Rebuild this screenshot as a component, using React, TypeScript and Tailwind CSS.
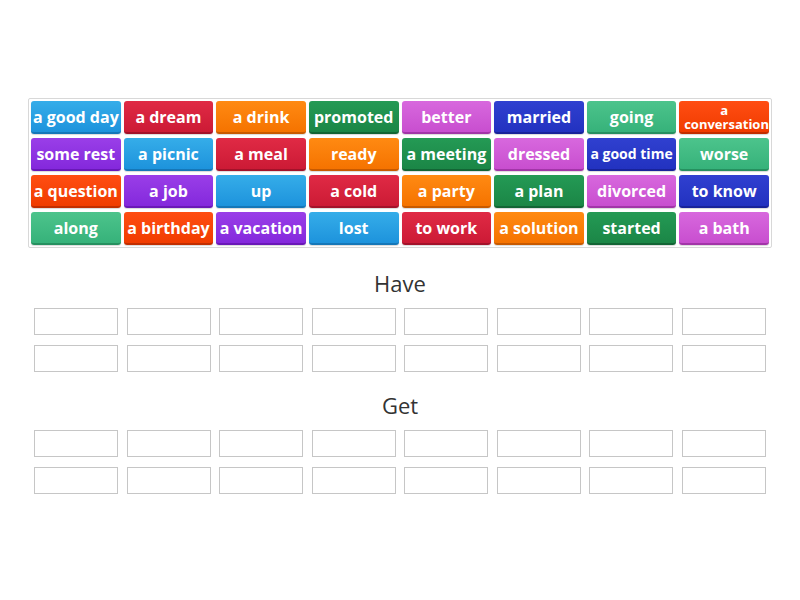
import React from "react";

const colors: Record<string, string> = {
  blue: "bg-linear-to-b from-[#35ade9] to-[#1d93dc] border-b-[#1577b8]",
  red: "bg-linear-to-b from-[#e02a45] to-[#cc1a35] border-b-[#a3122a]",
  orange: "bg-linear-to-b from-[#ff8a12] to-[#f57300] border-b-[#c85a00]",
  darkgreen: "bg-linear-to-b from-[#249a55] to-[#1b8646] border-b-[#136535]",
  pink: "bg-linear-to-b from-[#d868de] to-[#c84ecf] border-b-[#a235a8]",
  darkblue: "bg-linear-to-b from-[#3040d0] to-[#2232c0] border-b-[#18239a]",
  mint: "bg-linear-to-b from-[#4cc48c] to-[#36b27a] border-b-[#26905f]",
  redorange: "bg-linear-to-b from-[#ff4d12] to-[#f03c00] border-b-[#c22e00]",
  purple: "bg-linear-to-b from-[#9a3ee8] to-[#8428dc] border-b-[#6a18b8]",
};

const tiles: { text: string; color: string; size?: string }[] = [
  { text: "a good day", color: "blue" },
  { text: "a dream", color: "red" },
  { text: "a drink", color: "orange" },
  { text: "promoted", color: "darkgreen" },
  { text: "better", color: "pink" },
  { text: "married", color: "darkblue" },
  { text: "going", color: "mint" },
  { text: "a conversation", color: "redorange", size: "text-[13px] leading-[14px]" },
  { text: "some rest", color: "purple" },
  { text: "a picnic", color: "blue" },
  { text: "a meal", color: "red" },
  { text: "ready", color: "orange" },
  { text: "a meeting", color: "darkgreen" },
  { text: "dressed", color: "pink" },
  { text: "a good time", color: "darkblue", size: "text-[14px]" },
  { text: "worse", color: "mint" },
  { text: "a question", color: "redorange" },
  { text: "a job", color: "purple" },
  { text: "up", color: "blue" },
  { text: "a cold", color: "red" },
  { text: "a party", color: "orange" },
  { text: "a plan", color: "darkgreen" },
  { text: "divorced", color: "pink" },
  { text: "to know", color: "darkblue" },
  { text: "along", color: "mint" },
  { text: "a birthday", color: "redorange" },
  { text: "a vacation", color: "purple" },
  { text: "lost", color: "blue" },
  { text: "to work", color: "red" },
  { text: "a solution", color: "orange" },
  { text: "started", color: "darkgreen" },
  { text: "a bath", color: "pink" },
];

function DropGrid() {
  return (
    <div className="mx-[34px] grid grid-cols-8 gap-x-[8.6px] gap-y-[10px]">
      {Array.from({ length: 16 }).map((_, i) => (
        <div key={i} className="h-[27px] border border-[#c6c6c6] bg-white" />
      ))}
    </div>
  );
}

export default function App() {
  return (
    <div
      className="w-[800px] h-[600px] bg-white pt-[98px]"
      style={{ fontFamily: "'Open Sans', 'Liberation Sans', sans-serif" }}
    >
      {/* Word tiles */}
      <div className="mx-[28px] border border-[#d8d8d8] rounded-[2px] p-[2px] grid grid-cols-8 gap-x-[3px] gap-y-[4px]">
        {tiles.map((t) => (
          <div
            key={t.text}
            className={`h-[33px] flex items-center justify-center text-center rounded-[3px] border-b-2 text-white font-bold shadow-[0_1px_1px_rgba(0,0,0,0.15)] px-[2px] ${
              colors[t.color]
            } ${t.size ?? "text-[16px] leading-[20px]"}`}
          >
            <span className={t.text === "a conversation" ? "w-[80px]" : "whitespace-nowrap"}>
              {t.text}
            </span>
          </div>
        ))}
      </div>

      {/* Have */}
      <div className="mt-[20px] h-[30px] text-center text-[22px] leading-[30px] text-[#333333]">
        Have
      </div>
      <div className="mt-[10px]">
        <DropGrid />
      </div>

      {/* Get */}
      <div className="mt-[18px] h-[30px] text-center text-[22px] leading-[30px] text-[#333333]">
        Get
      </div>
      <div className="mt-[10px]">
        <DropGrid />
      </div>
    </div>
  );
}
